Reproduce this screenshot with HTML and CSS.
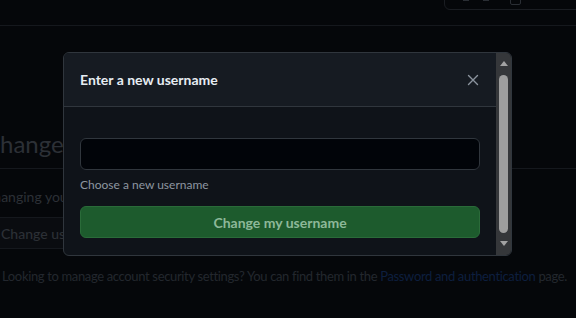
FILE: index.html
```html
<!DOCTYPE html>
<html lang="en">
<head>
    <meta charset="UTF-8">
    <meta name="viewport" content="width=device-width, initial-scale=1.0">
    <title>Change username</title>
    <link rel="stylesheet" href="styles.css">
</head>
<body>
    <div class="topbar">
        <div class="top-actions">
            <span class="dot"></span>
            <span class="dot"></span>
            <span class="sq"></span>
        </div>
    </div>
    <div class="page">
        <div class="subhead">
            <h2>Change username</h2>
        </div>
        <p class="note">Changing your username can have unintended side effects.</p>
        <button class="btn-plain">Change username</button>
        <p class="security">Looking to manage account security settings? You can find them in the <a href="#">Password and authentication</a> page.</p>
    </div>

    <div class="dialog">
        <div class="dialog-main">
            <div class="dialog-header">
                <h1>Enter a new username</h1>
                <svg class="close" width="16" height="16" viewBox="0 0 16 16">
                    <path d="M3.5 3.5 12.5 12.5M12.5 3.5 3.5 12.5" stroke="currentColor" stroke-width="1.4" stroke-linecap="round"/>
                </svg>
            </div>
            <div class="dialog-body">
                <input type="text" class="field">
                <div class="hint">Choose a new username</div>
                <button class="btn-primary">Change my username</button>
            </div>
        </div>
        <div class="scrollbar">
            <span class="arrow up"></span>
            <span class="thumb"></span>
            <span class="arrow down"></span>
        </div>
    </div>
</body>
</html>
```

FILE: styles.css
```css
body {
    margin: 0;
    height: 318px;
    overflow: hidden;
    background: #05070a;
    font-family: Lato, "Noto Sans", sans-serif;
    position: relative;
}
.topbar {
    height: 25px;
    border-bottom: 1px solid #15181d;
    position: relative;
}
.top-actions {
    position: absolute;
    left: 444px;
    top: -12px;
    width: 160px;
    height: 20px;
    border: 1px solid #1a1d22;
    border-radius: 6px;
}
.top-actions .dot {
    position: absolute;
    top: 10px;
    width: 6px;
    height: 2px;
    background: #2a2e34;
}
.top-actions .dot:nth-child(1) { left: 18px; }
.top-actions .dot:nth-child(2) { left: 38px; }
.top-actions .sq {
    position: absolute;
    left: 65px;
    top: 6px;
    width: 9px;
    height: 8px;
    border: 1px solid #2a2e34;
    border-radius: 2px;
}
.page {
    margin-left: -16px;
    padding-top: 102px;
    white-space: nowrap;
}
.subhead {
    border-bottom: 1px solid #15181d;
    margin-right: -40px;
    padding-bottom: 8px;
}
.subhead h2 {
    margin: 0;
    font-size: 24px;
    font-weight: 400;
    line-height: 32px;
    color: #2c3036;
}
.note {
    margin: 18px 0 10px;
    font-size: 14px;
    line-height: 20px;
    color: #2c3036;
}
.btn-plain {
    display: block;
    height: 32px;
    padding: 0 16px;
    font-family: inherit;
    font-size: 14px;
    font-weight: 500;
    color: #2c3036;
    background: #0a0c10;
    border: 1px solid #15181d;
    border-radius: 6px;
}
.security {
    margin: 19px 0 0 18px;
    font-size: 13px;
    letter-spacing: -0.35px;
    color: #23272e;
}
.security a {
    color: #0d1f3f;
    text-decoration: none;
}

.dialog {
    position: absolute;
    left: 63px;
    top: 52px;
    width: 447px;
    height: 202px;
    display: flex;
    border: 1px solid #30363d;
    border-radius: 6px;
    overflow: hidden;
    background: #0f1319;
}
.dialog-main {
    flex: 1;
}
.dialog-header {
    display: flex;
    align-items: center;
    justify-content: space-between;
    height: 53px;
    padding: 0 16px;
    background: #161b22;
    border-bottom: 1px solid #30363d;
}
.dialog-header h1 {
    margin: 0;
    font-size: 14px;
    font-weight: 700;
    color: #e6edf3;
}
.close {
    color: #8b949e;
    margin-right: -1px;
}
.dialog-body {
    padding: 31px 16px 0;
}
.field {
    display: block;
    box-sizing: border-box;
    width: 100%;
    height: 32px;
    background: #010409;
    border: 1px solid #30363d;
    border-radius: 6px;
}
.hint {
    margin-top: 6px;
    font-size: 12px;
    line-height: 18px;
    color: #8d96a0;
}
.btn-primary {
    display: block;
    width: 100%;
    height: 32px;
    margin-top: 12px;
    font-family: inherit;
    font-size: 14px;
    font-weight: 700;
    color: #8db899;
    background: #1d5b2d;
    border: 1px solid #2a6b39;
    border-radius: 6px;
}
.scrollbar {
    width: 15px;
    background: #35373a;
    display: flex;
    flex-direction: column;
    align-items: center;
}
.thumb {
    width: 9px;
    flex: 1;
    margin: 9px 0 8px;
    background: #9e9e9e;
    border-radius: 5px;
}
.arrow {
    width: 0;
    height: 0;
    border-left: 4px solid transparent;
    border-right: 4px solid transparent;
}
.arrow.up {
    margin-top: 8px;
    border-bottom: 5px solid #a3a3a3;
}
.arrow.down {
    margin-bottom: 9px;
    border-top: 5px solid #a3a3a3;
}
```
